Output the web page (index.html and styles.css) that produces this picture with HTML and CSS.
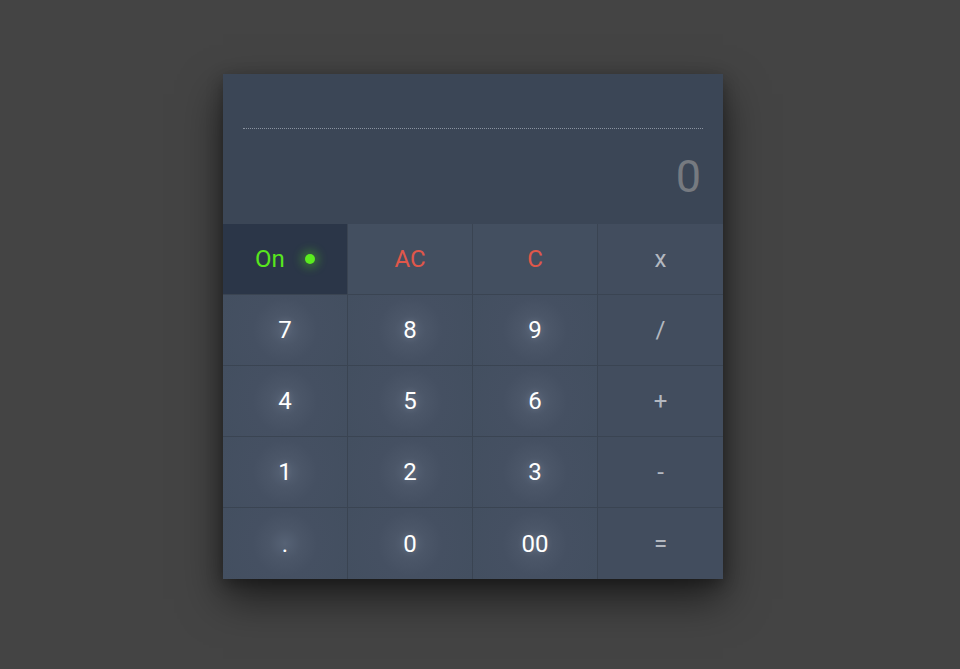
FILE: index.html
```html
<!DOCTYPE html>
<html>
<head>
<meta charset="utf-8">
<link rel="stylesheet" href="styles.css">
</head>
<body>
<div class="stage">
  <div class="calc">
    <div class="display">
      <div class="history"></div>
      <div class="result">0</div>
    </div>
    <div class="keys">
      <div class="key on">On <span class="led"></span></div>
      <div class="key red">AC</div>
      <div class="key red">C</div>
      <div class="key op">x</div>
      <div class="key num">7</div>
      <div class="key num">8</div>
      <div class="key num">9</div>
      <div class="key op">/</div>
      <div class="key num">4</div>
      <div class="key num">5</div>
      <div class="key num">6</div>
      <div class="key op">+</div>
      <div class="key num">1</div>
      <div class="key num">2</div>
      <div class="key num">3</div>
      <div class="key op">-</div>
      <div class="key num">.</div>
      <div class="key num">0</div>
      <div class="key num">00</div>
      <div class="key op">=</div>
    </div>
  </div>
</div>
</body>
</html>
```
FILE: styles.css
```css
html, body {
  margin: 0;
  padding: 0;
  height: 100%;
  background: #444444;
  font-family: Roboto, "Liberation Sans", sans-serif;
}
.stage {
  display: flex;
  justify-content: flex-start;
  padding-top: 74px;
  padding-left: 223px;
}
.calc {
  width: 500px;
  background: #3b4656;
  box-shadow: 0 20px 40px rgba(0, 0, 0, 0.55), 0 5px 15px rgba(0, 0, 0, 0.3);
}
.display {
  height: 150px;
  box-sizing: border-box;
  padding: 0 20px;
  display: flex;
  flex-direction: column;
}
.history {
  height: 54px;
  border-bottom: 1px dotted #8a93a0;
}
.result {
  text-align: right;
  font-size: 45px;
  color: #767a80;
  margin-top: 18px;
  line-height: 60px;
  padding-right: 2px;
}
.keys {
  display: grid;
  grid-template-columns: 125px 125px 125px 125px;
  grid-auto-rows: 71px;
}
.key {
  box-sizing: border-box;
  border-right: 1px solid #3a4452;
  border-bottom: 1px solid #3a4452;
  background: #434f60;
  display: flex;
  align-items: center;
  justify-content: center;
  font-size: 24px;
  color: #ffffff;
}
.key:nth-child(4n) {
  border-right: none;
}
.key:nth-last-child(-n+4) {
  border-bottom: none;
}
.num {
  background: radial-gradient(circle at center, #566275 0%, #4b5668 22%, #455062 45%, #434f60 100%);
  text-shadow: 0 0 6px rgba(255, 255, 255, 0.15);
}
.op {
  color: #b3b8c0;
  background: #424d5e;
}
.red {
  color: #e0574a;
}
.on {
  background: #2b3648;
  color: #58e61d;
  gap: 20px;
}
.led {
  width: 10px;
  height: 10px;
  border-radius: 50%;
  background: #5aec1f;
  box-shadow: 0 0 10px 4px rgba(85, 232, 28, 0.3);
}
```
